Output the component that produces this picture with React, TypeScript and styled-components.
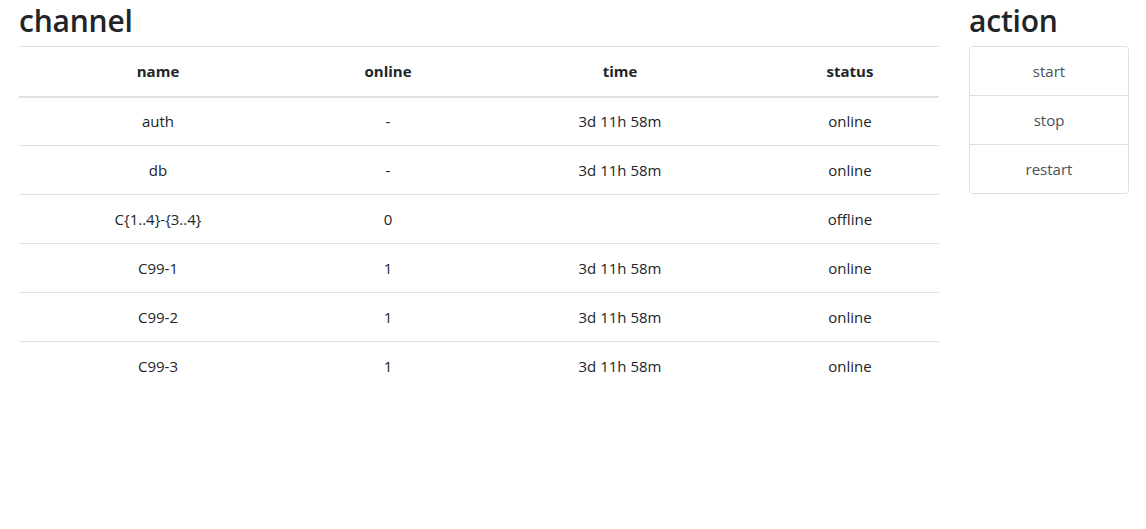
import React from 'react';
import styled, { createGlobalStyle } from 'styled-components';

const GlobalStyle = createGlobalStyle`
  * {
    box-sizing: border-box;
  }

  body {
    margin: 0;
    background-color: #fff;
    color: #212529;
    font-family: "Open Sans", "Noto Sans", sans-serif;
    font-size: 15px;
    line-height: 1.5;
  }
`;

const Page = styled.div`
  display: flex;
  gap: 30px;
  padding: 0 17px 0 19px;
`;

const Section = styled.section<{ width: number }>`
  flex: 0 0 ${p => p.width}px;
`;

const Title = styled.h2`
  margin: 0 0 5px;
  font-size: 30px;
  font-weight: 600;
  line-height: 41px;
  letter-spacing: -0.2px;
`;

const Table = styled.table`
  width: 100%;
  border-collapse: collapse;
  table-layout: fixed;
`;

const HeadCell = styled.th<{ width: number }>`
  width: ${p => p.width}px;
  height: 50px;
  padding: 0 12px;
  border-top: 1px solid #dee2e6;
  border-bottom: 2px solid #dee2e6;
  font-weight: 700;
  text-align: center;
  vertical-align: middle;
`;

const Cell = styled.td`
  height: 49px;
  padding: 0 12px;
  border-top: 1px solid #dee2e6;
  text-align: center;
  vertical-align: middle;
`;

const ActionList = styled.div`
  display: flex;
  flex-direction: column;
  border: 1px solid rgba(0, 0, 0, 0.125);
  border-radius: 4px;
  overflow: hidden;
`;

const ActionButton = styled.button`
  box-sizing: content-box;
  height: 48px;
  padding: 0 20px;
  border: 0;
  background: #fff;
  color: #495057;
  font: inherit;
  text-align: center;
  cursor: pointer;

  &:nth-of-type(n + 2) {
    border-top: 1px solid rgba(0, 0, 0, 0.125);
  }

  &:hover {
    background-color: #f8f9fa;
  }
`;

const columns = [
  { key: 'name', width: 278 },
  { key: 'online', width: 182 },
  { key: 'time', width: 282 },
  { key: 'status', width: 178 },
];

const channels = [
  { name: 'auth', online: '-', time: '3d 11h 58m', status: 'online' },
  { name: 'db', online: '-', time: '3d 11h 58m', status: 'online' },
  { name: 'C{1..4}-{3..4}', online: '0', time: '', status: 'offline' },
  { name: 'C99-1', online: '1', time: '3d 11h 58m', status: 'online' },
  { name: 'C99-2', online: '1', time: '3d 11h 58m', status: 'online' },
  { name: 'C99-3', online: '1', time: '3d 11h 58m', status: 'online' },
];

const actions = ['start', 'stop', 'restart'];

const App = () => (
  <>
    <GlobalStyle />
    <Page>
      <Section width={920}>
        <Title>channel</Title>
        <Table>
          <thead>
            <tr>
              {columns.map(col => (
                <HeadCell key={col.key} width={col.width}>
                  {col.key}
                </HeadCell>
              ))}
            </tr>
          </thead>
          <tbody>
            {channels.map(ch => (
              <tr key={ch.name}>
                <Cell>{ch.name}</Cell>
                <Cell>{ch.online}</Cell>
                <Cell>{ch.time}</Cell>
                <Cell>{ch.status}</Cell>
              </tr>
            ))}
          </tbody>
        </Table>
      </Section>
      <Section width={160}>
        <Title>action</Title>
        <ActionList>
          {actions.map(a => (
            <ActionButton key={a}>{a}</ActionButton>
          ))}
        </ActionList>
      </Section>
    </Page>
  </>
);

export default App;
